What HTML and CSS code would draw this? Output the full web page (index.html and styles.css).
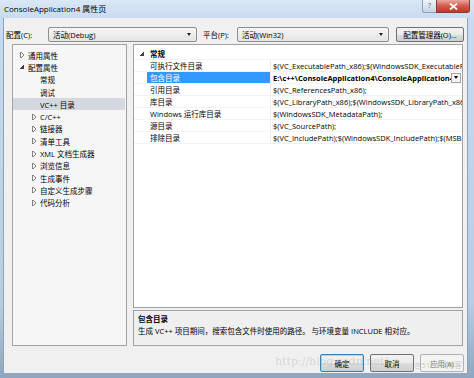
FILE: index.html
```html
<!DOCTYPE html>
<html lang="zh-CN">
<head>
  <meta charset="UTF-8">
  <title>ConsoleApplication4 属性页</title>
  <link rel="stylesheet" href="styles.css">
</head>
<body>
  <div class="window">
    <!-- title bar -->
    <div class="titlebar">
      <span class="title">ConsoleApplication4 属性页</span>
      <div class="caption">
        <span class="cap-help">?</span>
        <span class="cap-close">
          <svg width="9" height="7" viewBox="0 0 9 7"><path d="M1 0.5 L8 6.5 M8 0.5 L1 6.5" stroke="#fff" stroke-width="1.8"/></svg>
        </span>
      </div>
    </div>

    <div class="client">
      <!-- configuration / platform -->
      <div class="config-row">
        <span class="cfg-label">配置(C):</span>
        <div class="combo combo-config"><span>活动(Debug)</span><span class="drop"></span></div>
        <span class="cfg-label plat-label">平台(P):</span>
        <div class="combo combo-platform"><span>活动(Win32)</span><span class="drop"></span></div>
        <button class="btn btn-manager">配置管理器(O)...</button>
      </div>

      <div class="main">
        <!-- property tree -->
        <div class="tree">
          <div class="node"><span class="tw closed"></span>通用属性</div>
          <div class="node"><span class="tw open"></span>配置属性</div>
          <div class="node lv1"><span class="tw"></span>常规</div>
          <div class="node lv1"><span class="tw"></span>调试</div>
          <div class="node lv1 selected"><span class="tw"></span>VC++ 目录</div>
          <div class="node lv1"><span class="tw closed"></span>C/C++</div>
          <div class="node lv1"><span class="tw closed"></span>链接器</div>
          <div class="node lv1"><span class="tw closed"></span>清单工具</div>
          <div class="node lv1"><span class="tw closed"></span>XML 文档生成器</div>
          <div class="node lv1"><span class="tw closed"></span>浏览信息</div>
          <div class="node lv1"><span class="tw closed"></span>生成事件</div>
          <div class="node lv1"><span class="tw closed"></span>自定义生成步骤</div>
          <div class="node lv1"><span class="tw closed"></span>代码分析</div>
        </div>

        <div class="right">
          <!-- property grid -->
          <div class="grid">
            <div class="grow category">
              <span class="gutter"><span class="tw open"></span></span>
              <span class="gname">常规</span>
            </div>
            <div class="grow">
              <span class="gutter"></span>
              <span class="gname">可执行文件目录</span>
              <span class="gval">$(VC_ExecutablePath_x86);$(WindowsSDK_ExecutablePath_x86);$(FrameworkSDKDir)</span>
            </div>
            <div class="grow active">
              <span class="gutter"></span>
              <span class="gname">包含目录</span>
              <span class="gval"><span class="gtext">E:\c++\ConsoleApplication4\ConsoleApplication4\include;$(IncludePath)</span><span class="gdrop"></span></span>
            </div>
            <div class="grow">
              <span class="gutter"></span>
              <span class="gname">引用目录</span>
              <span class="gval">$(VC_ReferencesPath_x86);</span>
            </div>
            <div class="grow">
              <span class="gutter"></span>
              <span class="gname">库目录</span>
              <span class="gval">$(VC_LibraryPath_x86);$(WindowsSDK_LibraryPath_x86);$(NETFXKitsDir)</span>
            </div>
            <div class="grow">
              <span class="gutter"></span>
              <span class="gname">Windows 运行库目录</span>
              <span class="gval">$(WindowsSDK_MetadataPath);</span>
            </div>
            <div class="grow">
              <span class="gutter"></span>
              <span class="gname">源目录</span>
              <span class="gval">$(VC_SourcePath);</span>
            </div>
            <div class="grow">
              <span class="gutter"></span>
              <span class="gname">排除目录</span>
              <span class="gval">$(VC_IncludePath);$(WindowsSDK_IncludePath);$(MSBuild_ExecutablePath)</span>
            </div>
          </div>

          <!-- description -->
          <div class="desc">
            <div class="desc-title">包含目录</div>
            <div class="desc-text">生成 VC++ 项目期间，搜索包含文件时使用的路径。 与环境变量 INCLUDE 相对应。</div>
          </div>
        </div>
      </div>

      <div class="buttons">
        <button class="btn btn-default">确定</button>
        <button class="btn">取消</button>
        <button class="btn" disabled>应用(A)</button>
      </div>
    </div>

    <!-- image watermark -->
    <span class="mark mark-url">http://blog.csdn.net/</span>
    <span class="mark mark-site">@51CTO博客</span>
  </div>
</body>
</html>
```

FILE: styles.css
```css
body {
  margin: 0;
  font-family: "Open Sans", "Noto Sans CJK SC", sans-serif;
  font-size: 7.5px;
  color: #000;
}
.window {
  position: relative;
  width: 474px;
  height: 378px;
  background: linear-gradient(#c9dbef, #b7cde6 80%, #8ea5bf);
  overflow: hidden;
}

/* title bar */
.titlebar {
  height: 18px;
  display: flex;
  align-items: flex-start;
  background: linear-gradient(#dae7f5, #c8dbef);
}
.title {
  margin: 4px 0 0 4px;
  font-size: 8px;
  line-height: 10px;
}
.caption {
  margin-left: auto;
  margin-right: 4px;
  display: flex;
}
.cap-help {
  width: 14px;
  height: 13px;
  box-sizing: border-box;
  border: 1px solid #8d9fb5;
  border-right: none;
  border-top: none;
  border-radius: 0 0 0 3px;
  background: linear-gradient(#eef3f9, #c8d6e6);
  color: #55667a;
  font-size: 7px;
  line-height: 12px;
  text-align: center;
}
.cap-close {
  width: 34px;
  height: 13px;
  box-sizing: border-box;
  border: 1px solid #8a3b36;
  border-top: none;
  border-radius: 0 0 3px 0;
  background: linear-gradient(#e9a99f, #d3584b 50%, #c2382a);
  display: flex;
  align-items: center;
  justify-content: center;
}

/* client area */
.client {
  margin: 0 6px 0 3px;
  height: 355px;
  background: #f0f0f0;
  border-left: 1px solid #8ea2b8;
  border-right: 1px solid #8ea2b8;
  box-sizing: border-box;
}
.config-row {
  display: flex;
  align-items: center;
  padding: 8px 0 0 2px;
  height: 16px;
}
.cfg-label {
  width: 42px;
  font-size: 7.5px;
}
.plat-label {
  width: 34px;
  margin-left: 6px;
}
.combo {
  height: 15px;
  box-sizing: border-box;
  border: 1px solid #8e8f8f;
  border-radius: 2px;
  background: linear-gradient(#f6f6f6, #e4e4e4);
  display: flex;
  align-items: center;
  padding-left: 4px;
}
.combo-config { width: 149px; }
.combo-platform { width: 152px; }
.drop {
  margin-left: auto;
  margin-right: 5px;
  border-left: 2.5px solid transparent;
  border-right: 2.5px solid transparent;
  border-top: 3px solid #222;
}

.btn {
  font-family: inherit;
  font-size: 7.5px;
  height: 17px;
  padding: 0;
  box-sizing: border-box;
  border: 1px solid #707070;
  border-radius: 2px;
  background: linear-gradient(#f2f2f2 0%, #ebebeb 50%, #dddddd 51%, #cfcfcf 100%);
  color: #000;
}
.btn-manager {
  width: 68px;
  height: 15px;
  margin-left: 7px;
}
.btn-default {
  border-color: #3c7fb1;
  box-shadow: inset 0 0 0 1px #a9d6f5;
}
.btn:disabled {
  border-color: #adb2b5;
  background: #f4f4f4;
  color: #838383;
}

.main {
  display: flex;
  margin: 2px 0 0 8px;
  height: 302px;
}

/* tree */
.tree {
  width: 115px;
  box-sizing: border-box;
  border: 1px solid #9ea3a8;
  background: #f6f6f6;
  padding-top: 4px;
}
.node {
  height: 12.3px;
  display: flex;
  align-items: center;
  padding-left: 7px;
  white-space: nowrap;
}
.node.lv1 {
  padding-left: 19px;
}
.node.selected {
  background: #d4d9e1;
  margin-right: 1px;
}
.tw {
  width: 8px;
  height: 7px;
  flex: none;
}
.tw.closed {
  width: 4px;
  height: 6px;
  margin-right: 4px;
  box-sizing: border-box;
  border-left: 1px solid #808080;
  background:
    linear-gradient(to top right, transparent 49%, #808080 50%, transparent 62%) top / 100% 50% no-repeat,
    linear-gradient(to bottom right, transparent 49%, #808080 50%, transparent 62%) bottom / 100% 50% no-repeat;
}
.tw.open {
  width: 4px;
  height: 4px;
  margin-right: 4px;
  background: linear-gradient(to bottom right, transparent 50%, #404040 50%);
}

.right {
  width: 330px;
  margin-left: 6px;
  display: flex;
  flex-direction: column;
}

/* property grid */
.grid {
  height: 264px;
  box-sizing: border-box;
  border: 1px solid #9ea3a8;
  background: #fff;
  padding-top: 3px;
  overflow: hidden;
}
.grow {
  display: flex;
  height: 12px;
  line-height: 12px;
  box-sizing: border-box;
  border-bottom: 1px solid #f3f3f3;
}
.gutter {
  width: 13px;
  flex: none;
  display: flex;
  align-items: center;
  justify-content: flex-end;
}
.category .gutter .tw.open {
  margin-right: 3px;
}
.gname {
  width: 124px;
  flex: none;
  padding-left: 3px;
  box-sizing: border-box;
  border-right: 1px solid #ececec;
  white-space: nowrap;
}
.category .gname {
  border-right: none;
  font-weight: bold;
}
.active .gname {
  background: #3399ff;
  color: #fff;
}
.gval {
  flex: 1;
  min-width: 0;
  padding-left: 2px;
  white-space: nowrap;
  overflow: hidden;
  display: flex;
  align-items: center;
}
.gtext {
  flex: 1;
  min-width: 0;
  overflow: hidden;
  font-weight: bold;
}
.gdrop {
  width: 10px;
  height: 10px;
  flex: none;
  box-sizing: border-box;
  border: 1px solid #a5a5a5;
  background: #f3f3f3;
  display: flex;
  align-items: center;
  justify-content: center;
  margin-right: 1px;
}
.gdrop::after {
  content: "";
  border-left: 2.5px solid transparent;
  border-right: 2.5px solid transparent;
  border-top: 3px solid #000;
}

/* description */
.desc {
  margin-top: 2px;
  height: 36px;
  box-sizing: border-box;
  border: 1px solid #9ea3a8;
  background: #efefef;
  padding: 2px 4px;
  line-height: 12px;
}
.desc-title {
  font-weight: bold;
}

.buttons {
  display: flex;
  justify-content: flex-end;
  gap: 6px;
  margin-top: 8px;
  padding-right: 3px;
}
.buttons .btn {
  width: 44px;
  height: 18px;
}

/* watermark over the buttons */
.mark {
  position: absolute;
  white-space: nowrap;
  pointer-events: none;
}
.mark-url {
  left: 275px;
  top: 355px;
  font-family: "DejaVu Serif", serif;
  font-size: 11px;
  color: rgba(140, 140, 140, 0.28);
}
.mark-site {
  left: 414px;
  top: 359px;
  font-size: 8px;
  color: rgba(110, 110, 110, 0.35);
}
```
